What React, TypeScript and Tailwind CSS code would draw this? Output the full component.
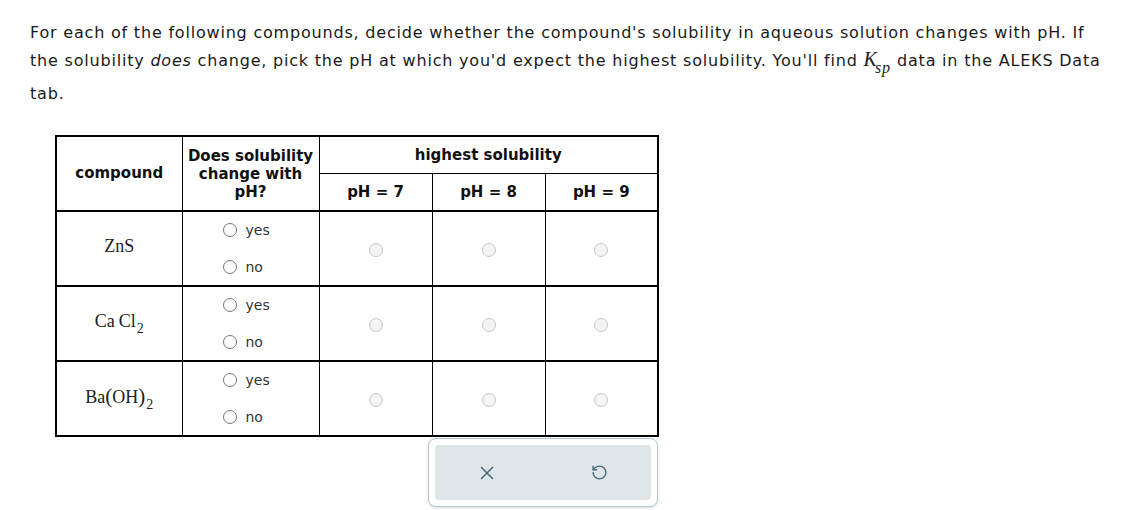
import React from 'react';

const sans = { fontFamily: '"DejaVu Sans", Verdana, sans-serif' };
const serif = { fontFamily: '"Liberation Serif", "Times New Roman", serif' };

const YesNo: React.FC = () => (
  <div className="flex flex-col gap-[19px] pl-[40px] text-[14px] text-[#333]">
    <label className="flex items-center gap-[9px] h-[18px]">
      <span className="w-[14px] h-[14px] rounded-full border border-[#767676] bg-white" />
      <span>yes</span>
    </label>
    <label className="flex items-center gap-[9px] h-[18px]">
      <span className="w-[14px] h-[14px] rounded-full border border-[#767676] bg-white" />
      <span>no</span>
    </label>
  </div>
);

const Dim: React.FC = () => (
  <div className="flex justify-center pt-[3px]">
    <span className="w-[14px] h-[14px] rounded-full border border-[#c8c8c8] bg-[#f4f4f4]" />
  </div>
);

const Sub: React.FC<{ children: React.ReactNode }> = ({ children }) => (
  <span className="text-[14px] relative top-[6px] ml-[1px]">{children}</span>
);

const rows: React.ReactNode[] = [
  <span>ZnS</span>,
  <span>
    Ca<span className="ml-[4px]">Cl</span>
    <Sub>2</Sub>
  </span>,
  <span>
    Ba<span className="text-[21px]">(</span>OH<span className="text-[21px]">)</span>
    <Sub>2</Sub>
  </span>,
];

const App: React.FC = () => {
  return (
    <div className="w-[1136px] h-[510px] bg-white overflow-hidden text-[#1a1a1a]" style={sans}>
      <p className="pl-[30px] pt-[20px] w-[1136px] text-[16px] leading-[26px] tracking-[0.8px] whitespace-nowrap">
        For each of the following compounds, decide whether the compound's solubility in aqueous solution changes with pH. If
        <br />
        the solubility <i>does</i> change, pick the pH at which you'd expect the highest solubility. You'll find{' '}
        <span style={serif} className="italic text-[20px] tracking-normal">K</span>
        <span style={serif} className="italic text-[16px] relative top-[7px] -ml-[2px] tracking-[1px]">sp</span> data in the ALEKS Data
        <br />
        <span className="inline-block mt-[7px]">tab.</span>
      </p>

      <div className="ml-[55px] mt-[28px] w-[602px]">
        <table className="border-collapse border-2 border-black table-fixed w-[602px]">
          <colgroup>
            <col className="w-[126px]" />
            <col className="w-[137px]" />
            <col className="w-[113px]" />
            <col className="w-[113px]" />
            <col className="w-[113px]" />
          </colgroup>
          <thead className="font-bold text-[15px] text-[#111]">
            <tr className="h-[37px]">
              <th rowSpan={2} className="border-r border-black border-b-2 font-bold">compound</th>
              <th rowSpan={2} className="border-r border-black border-b-2 font-bold leading-[18px] pt-[1px]">
                Does solubility<br />change with<br />pH?
              </th>
              <th colSpan={3} className="border-b border-black font-bold">highest solubility</th>
            </tr>
            <tr className="h-[38px]">
              <th className="border-r border-black border-b-2 font-bold">pH = 7</th>
              <th className="border-r border-black border-b-2 font-bold">pH = 8</th>
              <th className="border-b-2 border-black font-bold">pH = 9</th>
            </tr>
          </thead>
          <tbody>
            {rows.map((name, i) => (
              <tr key={i} className={`h-[75px] ${i < 2 ? 'border-b-2 border-black' : ''}`}>
                <td className="border-r border-black text-center text-[18px] text-[#222] pb-[4px]" style={serif}>
                  {name}
                </td>
                <td className="border-r border-black">
                  <YesNo />
                </td>
                <td className="border-r border-black"><Dim /></td>
                <td className="border-r border-black"><Dim /></td>
                <td><Dim /></td>
              </tr>
            ))}
          </tbody>
        </table>

        <div className="flex justify-end">
          <div className="w-[230px] mt-[1px] mr-[-1px] p-[6px] rounded-[8px] border border-[#b9c7ce] bg-white shadow-[0_1px_3px_rgba(0,0,0,0.15)]">
            <div className="h-[55px] rounded-[4px] bg-[#dfe6e9] flex">
              <button className="flex-1 flex items-center justify-center">
                <svg width="16" height="16" viewBox="0 0 16 16" fill="none" stroke="#4d6a77" strokeWidth="1.6" strokeLinecap="round">
                  <path d="M2.5 2.5l11 11M13.5 2.5l-11 11" />
                </svg>
              </button>
              <button className="flex-1 flex items-center justify-center pl-[10px]">
                <svg width="17" height="17" viewBox="0 0 24 24" fill="none" stroke="#4d6a77" strokeWidth="2" strokeLinecap="round" strokeLinejoin="round">
                  <path d="M3 12a9 9 0 1 0 9-9 9.75 9.75 0 0 0-6.74 2.74L3 8" />
                  <path d="M3 3v5h5" />
                </svg>
              </button>
            </div>
          </div>
        </div>
      </div>
    </div>
  );
};

export default App;
